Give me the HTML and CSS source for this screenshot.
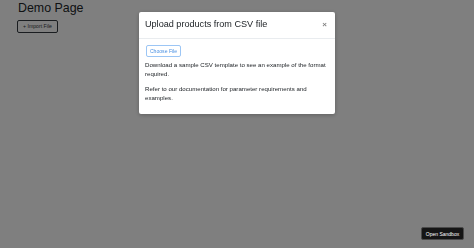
FILE: index.html
```html
<!DOCTYPE html>
<html lang="en">
<head>
    <meta charset="UTF-8">
    <meta name="viewport" content="width=device-width, initial-scale=1.0">
    <title>Demo Page</title>
    <link rel="stylesheet" href="styles.css">
</head>
<body>
    <main class="page">
        <h1 class="page-title">Demo Page</h1>
        <button class="btn-import" type="button">+ Import File</button>
    </main>

    <!-- modal -->
    <div class="backdrop">
        <div class="modal">
            <div class="modal-header">
                <h5 class="modal-title">Upload products from CSV file</h5>
                <button class="close" type="button">&times;</button>
            </div>
            <div class="modal-body">
                <button class="btn-choose" type="button">Choose File</button>
                <p>Download a sample CSV template to see an example of the format required.</p>
                <p>Refer to our documentation for parameter requirements and examples.</p>
            </div>
        </div>
    </div>

    <a class="sandbox-btn" href="#">Open Sandbox</a>
</body>
</html>
```

FILE: styles.css
```css
body {
    font-family: "Liberation Sans", Arial, sans-serif;
    margin: 0;
    padding: 0;
    background-color: #ffffff;
    color: #212529;
}

.page {
    padding: 1px 18px;
}

.page-title {
    font-size: 12.4px;
    font-weight: 400;
    line-height: 1.2;
    margin: 0 0 4px;
}

.btn-import {
    display: block;
    font-family: inherit;
    font-size: 5.2px;
    height: 13px;
    width: 41px;
    padding: 0;
    margin-left: -1px;
    background: transparent;
    color: #343a40;
    border: 1px solid #343a40;
    border-radius: 2px;
}

.backdrop {
    position: fixed;
    inset: 0;
    background-color: rgba(0, 0, 0, 0.5);
    display: flex;
    justify-content: center;
    align-items: flex-start;
    padding-top: 12px;
}

.modal {
    width: 196px;
    background-color: #ffffff;
    border-radius: 2px;
    box-shadow: 0 1px 4px rgba(0, 0, 0, 0.25);
}

.modal-header {
    display: flex;
    align-items: center;
    justify-content: space-between;
    padding: 6px;
    border-bottom: 1px solid #e9ecef;
}

.modal-title {
    margin: 0;
    font-size: 9.1px;
    font-weight: 400;
    line-height: 1.5;
}

.close {
    font-family: inherit;
    font-size: 8px;
    font-weight: 700;
    line-height: 1;
    padding: 0;
    margin-right: 2px;
    background: none;
    border: none;
    color: #000000;
    opacity: 0.5;
}

.modal-body {
    padding: 6px;
    font-size: 6.12px;
    line-height: 1.5;
}

.btn-choose {
    display: block;
    font-family: inherit;
    font-size: 5.1px;
    height: 12px;
    width: 35px;
    padding: 0;
    margin: 0 0 3px 1px;
    background: #ffffff;
    color: #4a90e2;
    border: 1px solid #9cc6f5;
    border-radius: 2px;
}

.modal-body p {
    margin: 0 0 6px;
}

.sandbox-btn {
    position: fixed;
    right: 10px;
    bottom: 8px;
    width: 43px;
    height: 13px;
    box-sizing: border-box;
    display: flex;
    align-items: center;
    justify-content: center;
    white-space: nowrap;
    background-color: #151515;
    border: 1px solid #4a4a4a;
    border-radius: 2px;
    color: #ffffff;
    font-size: 5px;
    text-decoration: none;
}
```
